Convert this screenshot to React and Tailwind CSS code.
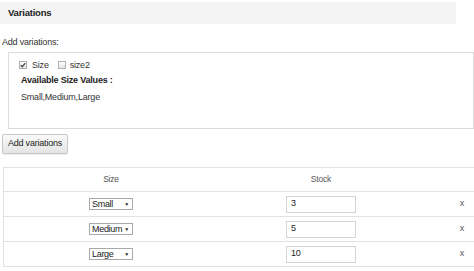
import React from 'react';

const rows = [
    { size: 'Small', stock: '3' },
    { size: 'Medium', stock: '5' },
    { size: 'Large', stock: '10' },
];

const Check = ({ checked }) => (
    <span className="w-[8px] h-[8px] border border-[#b0b0b0] bg-gradient-to-b from-[#ffffff] to-[#e4e4e4] flex items-center justify-center">
        {checked && (
            <svg width="6" height="6" viewBox="0 0 8 8">
                <path d="M1 4.2 L3 6.3 L7 1.5" fill="none" stroke="#444" strokeWidth="1.6" />
            </svg>
        )}
    </span>
);

const FakeSelect = ({ value }) => (
    <span className="w-[44px] h-[12px] border border-[#a9a9a9] bg-white flex items-center justify-between pl-[2px] pr-[3px] text-[9px] leading-none text-[#222] tracking-[-0.3px]">
        <span>{value}</span>
        <span className="text-[5px]">▼</span>
    </span>
);

export default function App() {
    return (
        <div className="w-[474px] h-[271px] overflow-hidden bg-white text-[#333] font-['Liberation_Sans',Arial,sans-serif] tracking-[-0.2px]">
            <div className="pt-[2px]">
                <div className="w-[456px] h-[22px] bg-[#f4f4f4] flex items-center pl-[8px] text-[9.5px] font-bold text-[#222]">
                    Variations
                </div>
            </div>

            <div className="pl-[2px] mt-[12px] text-[9px] leading-[12px] text-[#333]">Add variations:</div>

            <div className="ml-[8px] mt-[4px] h-[77px] border border-[#dcdcdc] pl-[9px] pt-[7px] text-[9px] leading-[11px]">
                <div className="flex items-center h-[10px] pl-[1px]">
                    <Check checked />
                    <span className="ml-[5px] mr-[9px]">Size</span>
                    <Check />
                    <span className="ml-[4px]">size2</span>
                </div>
                <div className="mt-[5px] pl-[3px] font-bold text-[#222]">Available Size Values :</div>
                <div className="mt-[6px] pl-[3px]">Small,Medium,Large</div>
            </div>

            <div className="flex pl-[2px] mt-[5px]">
                <button className="h-[20px] w-[66px] border border-[#c8c8c8] rounded-[2px] bg-gradient-to-b from-[#fafafa] to-[#e4e4e4] text-[9px] text-[#222] shadow-[0_1px_1px_rgba(0,0,0,0.08)]">
                    Add variations
                </button>
            </div>

            <div className="ml-[3px] mt-[13px] w-[520px] border-l border-[#e2e2e2]">
                <div className="grid grid-cols-[214px_206px_76px] h-[25px] border-t border-b border-[#e2e2e2] items-center text-[8.5px] text-[#555]">
                    <div className="text-center">Size</div>
                    <div className="text-center">Stock</div>
                    <div></div>
                </div>
                {rows.map((r) => (
                    <div key={r.size} className="grid grid-cols-[214px_206px_76px] h-[25px] border-b border-[#e2e2e2] items-center text-[9px]">
                        <div className="flex justify-center">
                            <FakeSelect value={r.size} />
                        </div>
                        <div className="flex justify-center">
                            <span className="w-[70px] h-[17px] border border-[#d4d4d4] flex items-center pl-[4px] text-[9px] text-[#222]">
                                {r.stock}
                            </span>
                        </div>
                        <div className="text-center text-[9px] text-[#555]">x</div>
                    </div>
                ))}
            </div>
        </div>
    );
}
